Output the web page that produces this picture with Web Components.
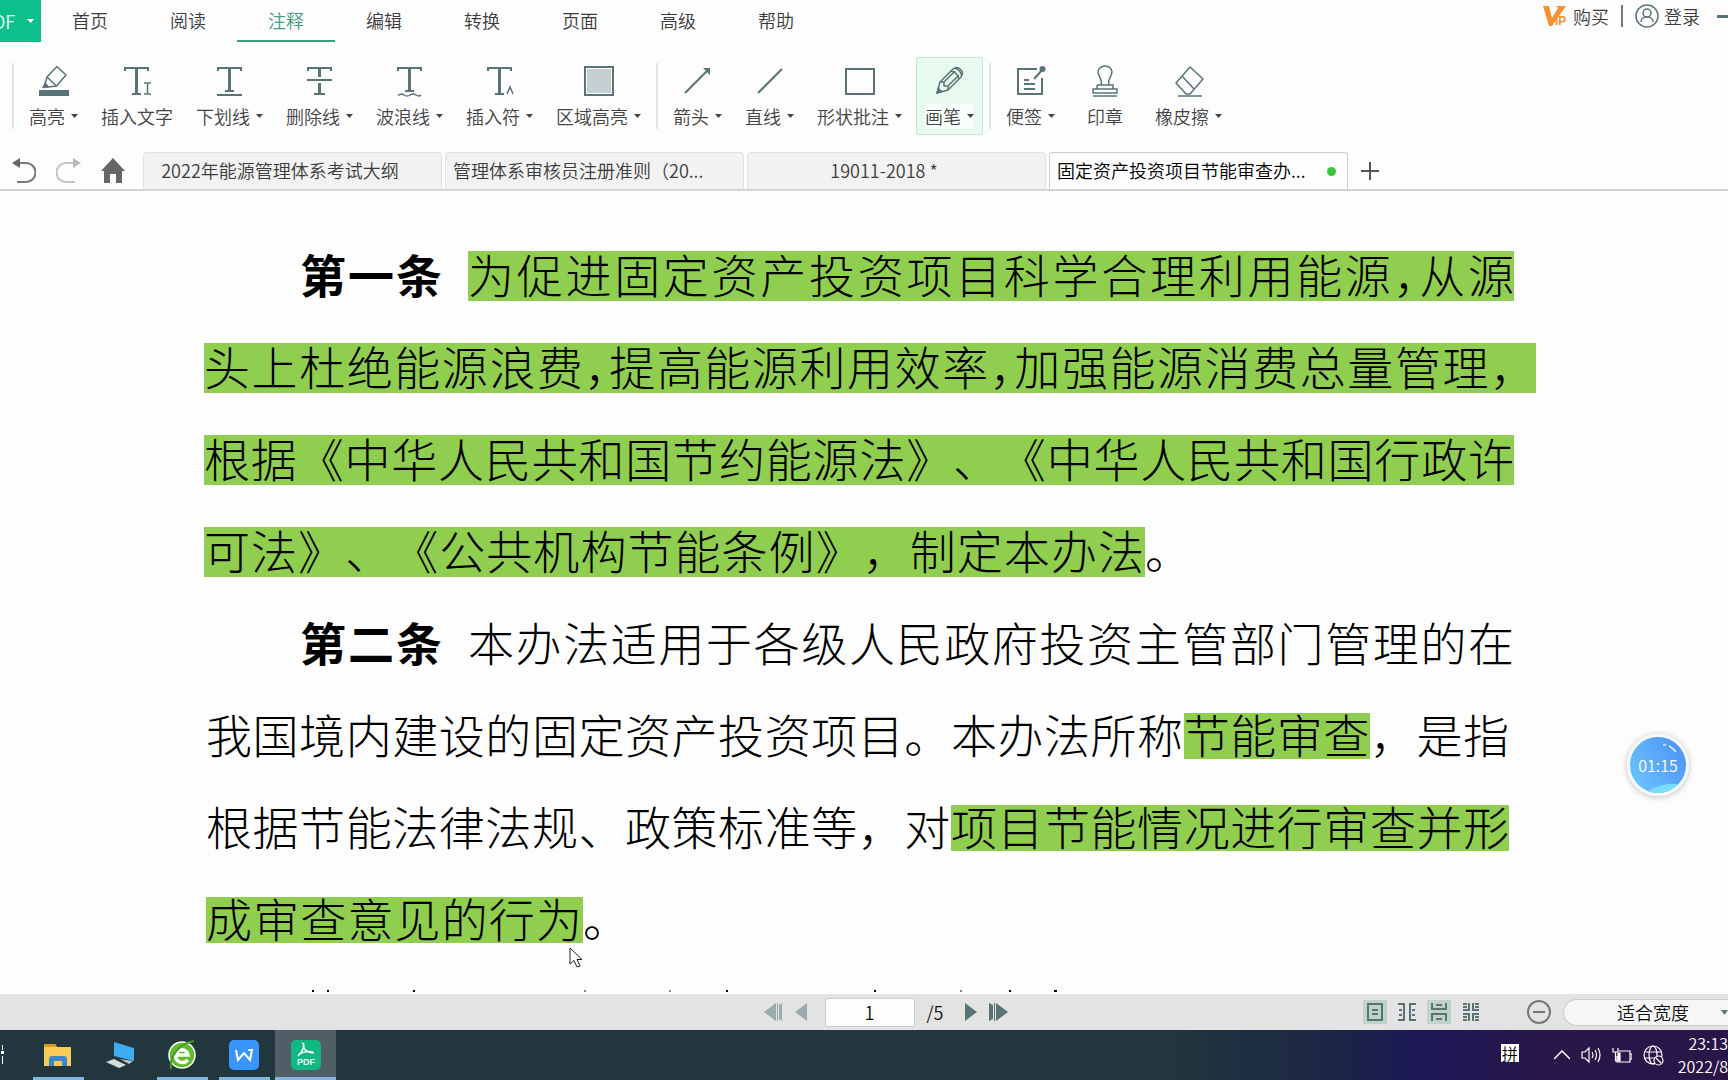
<!DOCTYPE html>
<html lang="zh-CN">
<head>
<meta charset="utf-8">
<title>PDF</title>
<style>
    body {
        margin: 0;
        height: 100vh;
        overflow: hidden;
        background: #fdfdfd;
        color: #3c3c3c;
        font-family: "Noto Sans CJK SC", sans-serif;
        font-size: 18px;
        font-weight: 350;
    }
</style>
</head>
<body>
<pdf-app></pdf-app>

<script>
const base = `
    * { margin: 0; padding: 0; box-sizing: border-box; }
    button, input, select { font: inherit; color: inherit; background: none; border: 0; }
    svg { display: block; flex: none; }
`;

const ink = 'fill="none" stroke="#587476" stroke-width="2"';
const thin = 'fill="none" stroke="#587476" stroke-width="1.5"';

// the big serif T shared by the text tools, b is its foot
const bigT = (b) => `<path d="M4 6V3H27V6M11 ${b}H20" ${ink}/><path d="M15.5 3V${b}" fill="none" stroke="#587476" stroke-width="3"/>`;

const icons = {
    highlight: `<path d="M19 1.5 28 10 18.5 21 6 22.5 9 12ZM9 12 18.5 21" ${thin} stroke-linejoin="round"/><path d="M4 23 7 17 11 21.5Z" fill="#587476"/><rect x="1" y="25" width="30" height="6" fill="#587476"/>`,
    insert: `${bigT(29)}<path d="M23 18H30M26.5 18V29M23 29H30" ${thin}/>`,
    under: `${bigT(26)}<path d="M3 30H28" ${ink}/>`,
    strike: `<path d="M4 6V3H27V6M10 29H21M3 15H28" ${ink}/><path d="M15.5 3V12M15.5 18V29" fill="none" stroke="#587476" stroke-width="3"/>`,
    wave: `${bigT(26)}<path d="M4 30.5Q7 28 10 30T16 30T22 30T27 30" ${thin}/>`,
    caret: `${bigT(29)}<path d="M23 29 26 22 29 29" ${thin}/>`,
    area: `<rect x="2" y="2" width="28" height="28" ${ink}/><rect x="4" y="4" width="24" height="24" fill="#c5cfd0"/>`,
    arrow: `<path d="M3 28 26 5" ${ink}/><path d="M21 3H28V10Z" fill="#587476"/>`,
    line: `<path d="M4 28 28 4" ${ink}/>`,
    rect: `<rect x="2" y="4" width="28" height="25" ${ink}/>`,
    pencil: `<path d="M3 28 6 17 19 4Q23 1 26 4L27 5Q30 8 27 12L14 25ZM6 17 10 17 10 21 14 21 14 25M10 17 21 6M14 21 25 10M17 6Q23 7 25 14M20 3Q26 4 28 11" ${thin} stroke-linejoin="round"/><path d="M2 29 4 22 9 27Z" fill="#587476"/>`,
    note: `<path d="M22 4H3V29H27V13M19 14 28 4M9 15H14M9 19H20M9 24H20" ${ink}/><circle cx="27.5" cy="4" r="3" fill="#587476"/>`,
    stamp: `<path d="M12 20C14 15 9 11 9 7A7 6 0 0 1 23 7C23 11 18 15 20 20M8 20H24V24M8 20V24M4 24H28V28H4ZM4 31H28" ${thin}/>`,
    eraser: `<path d="M17 2 30 14 17 29H13L3 18ZM9 11 21 24M5 31H29" ${thin} stroke-linejoin="round"/>`,
};

class MenuBar extends HTMLElement {
    constructor() {
        super();
        this.attachShadow({ mode: 'open' });
        const items = ['首页', '阅读', '注释', '编辑', '转换', '页面', '高级', '帮助'];
        this.shadowRoot.innerHTML = `
        <style>
            ${base}
            :host { display: flex; height: 42px; flex: none; }
            .brand { width: 41px; background: #0bc08b; color: #e8fff6; display: flex; justify-content: flex-end; align-items: center; gap: 12px; padding-right: 7px; overflow: hidden; }
            nav { display: flex; }
            nav a { width: 98px; text-align: center; line-height: 40px; border-bottom: 2px solid transparent; color: inherit; text-decoration: none; }
            nav a.on { color: #3f9c80; border-color: #3a9e84; }
            .account { margin-left: auto; display: flex; align-items: center; height: 32px; gap: 6px; }
            .account i { width: 2px; height: 22px; background: #777; margin: 0 6px; }
            .account button { display: flex; align-items: center; gap: 5px; }
            .account .min { margin-left: 11px; }
        </style>
        <button class="brand"><span>PDF</span><svg width="7" height="5"><path d="M0 0H7L3.5 4Z" fill="#fff"/></svg></button>
        <nav>${items.map(t => `<a href="#" class="${t === '注释' ? 'on' : ''}">${t}</a>`).join('')}</nav>
        <div class="account">
            <button>
                <svg width="25" height="22"><path d="M0 1H6L9 13 15 3 13 1H23L9 21H6Z" fill="#f79234"/><text x="12" y="20" font-family="Liberation Sans" font-weight="bold" font-size="12" fill="#f79234">IP</text></svg>
                <span>购买</span>
            </button>
            <i></i>
            <button>
                <svg width="24" height="24" fill="none" stroke="#587476" stroke-width="1.5"><circle cx="12" cy="12" r="11"/><circle cx="12" cy="9" r="4"/><path d="M6 18C6 11 18 11 18 18"/></svg>
                <span>登录</span>
            </button>
            <button class="min" aria-label="最小化"><svg width="11" height="3"><path d="M0 1.5H11" stroke="#587476" stroke-width="3"/></svg></button>
        </div>`;
    }
}
customElements.define('menu-bar', MenuBar);

class ToolButton extends HTMLElement {
    constructor() {
        super();
        this.attachShadow({ mode: 'open' });
    }

    connectedCallback() {
        const drop = this.hasAttribute('drop') ? '<svg width="7" height="5"><path d="M0 0H7L3.5 4Z" fill="#444"/></svg>' : '';
        this.shadowRoot.innerHTML = `
        <style>
            ${base}
            :host { display: block; }
            button { display: flex; flex-direction: column; align-items: center; gap: 7px; height: 78px; padding: 7px 8px; border: 1px solid transparent; border-radius: 2px; }
            :host([selected]) button { background: #e8f9f0; border-color: #bfe8d6; }
            :host([selected]) span { background: #f9fdfb; }
            span { display: flex; align-items: center; gap: 6px; line-height: 24px; color: #444; white-space: nowrap; }
        </style>
        <button><svg width="32" height="32">${icons[this.getAttribute('icon')]}</svg><span><slot></slot>${drop}</span></button>`;
    }
}
customElements.define('tool-button', ToolButton);

class ToolBar extends HTMLElement {
    constructor() {
        super();
        this.attachShadow({ mode: 'open' });
        this.shadowRoot.innerHTML = `
        <style>
            ${base}
            :host { display: flex; flex: none; padding: 15px 0 17px 12px; }
            hr { width: 2px; height: 66px; border: 0; background: #e4e4e4; margin-top: 6px; }
            div { display: flex; gap: 5px; padding: 0 6px; }
            div.wide { gap: 14px; }
        </style>
        <hr>
        <div>
            <tool-button icon="highlight" drop>高亮</tool-button>
            <tool-button icon="insert">插入文字</tool-button>
            <tool-button icon="under" drop>下划线</tool-button>
            <tool-button icon="strike" drop>删除线</tool-button>
            <tool-button icon="wave" drop>波浪线</tool-button>
            <tool-button icon="caret" drop>插入符</tool-button>
            <tool-button icon="area" drop>区域高亮</tool-button>
        </div>
        <hr>
        <div>
            <tool-button icon="arrow" drop>箭头</tool-button>
            <tool-button icon="line" drop>直线</tool-button>
            <tool-button icon="rect" drop>形状批注</tool-button>
            <tool-button icon="pencil" drop selected>画笔</tool-button>
        </div>
        <hr>
        <div class="wide">
            <tool-button icon="note" drop>便签</tool-button>
            <tool-button icon="stamp">印章</tool-button>
            <tool-button icon="eraser" drop>橡皮擦</tool-button>
        </div>`;
    }
}
customElements.define('tool-bar', ToolBar);

class DocTab extends HTMLElement {
    constructor() {
        super();
        this.attachShadow({ mode: 'open' });
        this.shadowRoot.innerHTML = `
        <style>
            ${base}
            :host { display: block; width: 299px; }
            button { display: flex; align-items: center; width: 100%; height: 37px; padding: 0 11px 0 7px; background: #f2f2f2; border: 1px solid #e2e2e2; border-bottom: 0; border-radius: 4px 4px 0 0; }
            span { width: 258px; padding-bottom: 2px; text-align: center; white-space: nowrap; }
            :host([long]) span { text-align: left; }
            :host([current]) button { background: #fdfdfd; border-color: #ccc; color: #000; }
            i { display: none; width: 9px; height: 9px; border-radius: 50%; background: #3cc43c; margin-left: auto; }
            :host([current]) i { display: block; }
        </style>
        <button><span><slot></slot></span><i></i></button>`;
    }
}
customElements.define('doc-tab', DocTab);

class TabStrip extends HTMLElement {
    constructor() {
        super();
        this.attachShadow({ mode: 'open' });
        this.shadowRoot.innerHTML = `
        <style>
            ${base}
            :host { display: flex; flex: none; gap: 3px; padding-left: 12px; border-bottom: 2px solid #d4d4d4; }
            .tools { display: flex; align-items: center; gap: 20px; width: 128px; }
            .add { padding: 0 10px; }
        </style>
        <div class="tools">
            <button aria-label="撤销"><svg width="24" height="26" fill="none" stroke="#777" stroke-width="2"><path d="M4 5H14A9 9 0 0 1 14 24H5"/><path d="M0 5 8 0V10Z" fill="#666" stroke="none"/></svg></button>
            <button aria-label="重做"><svg width="25" height="26" fill="none" stroke="#c4c4c4" stroke-width="2"><path d="M20 5H10A9 9 0 0 0 10 24H19"/><path d="M25 5 17 0V10Z" fill="#bbb" stroke="none"/></svg></button>
            <button aria-label="主页"><svg width="24" height="26" fill="#666"><path d="M12 0 24 13H21V25H15V16H9V25H3V13H0Z"/></svg></button>
        </div>
        <doc-tab>2022年能源管理体系考试大纲</doc-tab>
        <doc-tab long>管理体系审核员注册准则（20...</doc-tab>
        <doc-tab>19011-2018 *</doc-tab>
        <doc-tab current long>固定资产投资项目节能审查办...</doc-tab>
        <button class="add" aria-label="新建"><svg width="18" height="18"><path d="M0 9H18M9 0V18" stroke="#555" stroke-width="2"/></svg></button>`;
    }
}
customElements.define('tab-strip', TabStrip);

// one line of the page, spread over the column width
class TextLine extends HTMLElement {
    constructor() {
        super();
        this.attachShadow({ mode: 'open' });
    }

    connectedCallback() {
        const chars = this.getAttribute('chars');
        this.shadowRoot.innerHTML = `
        <style>
            ${base}
            :host { display: flex; line-height: 92px; white-space: nowrap; }
            p { flex: ${chars ? `none; width: calc(${chars} * 47px)` : '1'}; text-align-last: justify; }
        </style>
        <slot name="head"></slot><p><slot></slot></p>`;
    }
}
customElements.define('text-line', TextLine);

class DocPage extends HTMLElement {
    constructor() {
        super();
        this.attachShadow({ mode: 'open' });
        this.shadowRoot.innerHTML = `
        <style>
            ${base}
            :host { display: block; flex: 1; min-height: 0; overflow: hidden; position: relative; padding: 36px 214px 0 204px; color: #000; font-size: 46px; font-weight: 300; text-spacing-trim: space-all; }
            b { width: 142px; margin: 0 26px 0 96px; font-weight: 700; text-align-last: justify; }
            mark { color: inherit; background: linear-gradient(#90ce4f, #90ce4f) 0 11px / 100% 50px no-repeat; }
            text-line.pen { margin: 0 5px 0 2px; }
            .pen mark { background-size: 100% 46px; background-position: 0 13px; }
            .half { font-feature-settings: "halt"; }
            text-line.hang { margin-right: -22px; }
            .cursor { position: absolute; left: 569px; top: 756px; }
            .next { position: absolute; left: 308px; bottom: 1px; }
            .timer { position: absolute; right: 39px; top: 543px; width: 62px; height: 62px; border-radius: 50%; border: 3px solid #f4f9ff; box-shadow: 0 1px 6px rgba(0, 0, 0, .25); background: linear-gradient(60deg, #6fc8fb, #4a8ff8); overflow: hidden; color: #fff; font-size: 16px; font-weight: 350; }
            .timer svg { position: absolute; inset: 0; }
            .timer span { position: relative; }
        </style>
        <text-line><b slot="head">第一条</b><mark>为促进固定资产投资项目科学合理利用能源<span class="half">，</span>从源</mark></text-line>
        <text-line class="hang"><mark>头上杜绝能源浪费<span class="half">，</span>提高能源利用效率<span class="half">，</span>加强能源消费总量管理，</mark></text-line>
        <text-line><mark>根据《中华人民共和国节约能源法》、《中华人民共和国行政许</mark></text-line>
        <text-line chars="21"><mark>可法》、《公共机构节能条例》，制定本办法</mark>。</text-line>
        <text-line><b slot="head">第二条</b>本办法适用于各级人民政府投资主管部门管理的在</text-line>
        <text-line class="pen">我国境内建设的固定资产投资项目。本办法所称<mark>节能审查</mark>，是指</text-line>
        <text-line class="pen">根据节能法律法规、政策标准等，对<mark>项目节能情况进行审查并形</mark></text-line>
        <text-line class="pen" chars="9"><mark>成审查意见的行为</mark>。</text-line>
        <!-- stroke tips of the following line, just above the page edge -->
        <svg class="next" width="760" height="4"><path d="M4 2H6M19 2H21M105 2H107M418 2H420M566 2H568M701 2H703M746 2H749" stroke="#000" stroke-width="2"/><path d="M276 2H278M361 2H363M652 2H654" stroke="#888" stroke-width="2"/></svg>
        <svg class="cursor" width="14" height="21"><path d="M1 1V17L5 13.5 8 20 11 19 8 12.5H13Z" fill="#fff" stroke="#222"/></svg>
        <button class="timer">
            <svg width="56" height="56"><path d="M16 56Q24 49 38 47Q46 46 50 48L48 56Z" fill="#79dcfb"/><path d="M33 8H36M39 9Q43 11 46 15" fill="none" stroke="#d9efff" stroke-width="1.5"/></svg>
            <span>01:15</span>
        </button>`;
    }
}
customElements.define('doc-page', DocPage);

class StatusBar extends HTMLElement {
    constructor() {
        super();
        this.attachShadow({ mode: 'open' });
        this.shadowRoot.innerHTML = `
        <style>
            ${base}
            :host { display: grid; grid-template-columns: 1fr auto 1fr; align-items: center; flex: none; height: 36px; background: #e3e3e3; color: #111; }
            .pager { grid-column: 2; display: flex; align-items: center; gap: 12px; margin-left: 44px; }
            input { width: 90px; height: 29px; background: #fdfdfd; border: 1px solid #ccc; border-radius: 3px; text-align: center; margin-left: 6px; }
            .pager .next { margin-left: 10px; }
            .view { display: flex; align-items: center; justify-content: flex-end; }
            .modes { display: flex; gap: 8px; margin-right: 44px; }
            .modes button { width: 24px; height: 24px; }
            .modes .on { background: #bfd3c7; }
            .zoom { display: flex; align-items: center; position: relative; margin-left: 12px; }
            select { appearance: none; width: 165px; height: 27px; line-height: 25px; padding-left: 14px; text-align-last: center; background: #f6f6f6; border: 1px solid #ccc; border-right: 0; border-radius: 14px 0 0 14px; }
            .zoom svg { position: absolute; right: 0; }
        </style>
        <div class="pager">
            <button aria-label="首页"><svg width="19" height="20" fill="#9aabab"><path d="M0 10 12 1V19ZM13 1H14V19H13ZM18 1V19L15 17V3Z"/></svg></button>
            <button aria-label="上一页"><svg width="12" height="20" fill="#9aabab"><path d="M0 10 12 1V19Z"/></svg></button>
            <input value="1" aria-label="页码">
            <span>/5</span>
            <button class="next" aria-label="下一页"><svg width="12" height="20" fill="#587476"><path d="M12 10 0 1V19Z"/></svg></button>
            <button aria-label="末页"><svg width="19" height="20" fill="#587476"><path d="M19 10 7 1V19ZM0 1 4 3V17L0 19ZM5 1H6V19H5Z"/></svg></button>
        </div>
        <div class="view">
            <div class="modes">
                <button class="on" aria-label="单页"><svg width="24" height="24" fill="none" stroke="#587476" stroke-width="2"><path d="M5 4H19V20H5ZM9 10H15M9 14H15"/></svg></button>
                <button aria-label="双页"><svg width="24" height="24" fill="none" stroke="#587476" stroke-width="2"><path d="M3 4H9V20H3M21 4H15V20H21M4 10H7M4 15H7M17 10H20M17 15H20"/></svg></button>
                <button class="on" aria-label="连续"><svg width="24" height="24" fill="none" stroke="#587476" stroke-width="2"><path d="M5 3V9H19V3M5 21V14H19V21M9 5H15M9 19H15"/></svg></button>
                <button aria-label="双页连续"><svg width="24" height="24" fill="none" stroke="#587476" stroke-width="2"><path d="M4 10H10V3M20 10H14V3M4 14H10V21M20 14H14V21M4 4H8M4 7H8M16 4H20M16 7H20M4 17H8M4 20H8M16 17H20M16 20H20"/></svg></button>
            </div>
            <button aria-label="缩小"><svg width="24" height="24" fill="none" stroke="#777" stroke-width="2"><circle cx="12" cy="12" r="11"/><path d="M6 12H18"/></svg></button>
            <div class="zoom">
                <select aria-label="缩放"><option>适合宽度</option></select>
                <svg width="7" height="5"><path d="M0 0H7L3.5 5Z" fill="#587476"/></svg>
            </div>
        </div>`;
    }
}
customElements.define('status-bar', StatusBar);

class TaskBar extends HTMLElement {
    constructor() {
        super();
        this.attachShadow({ mode: 'open' });
        this.shadowRoot.innerHTML = `
        <style>
            ${base}
            :host { display: flex; flex: none; height: 50px; color: #fff; background: linear-gradient(90deg, #21363d 68%, #1b2446 78%, #1d1857 82%, #291749 90%, #2b1548); }
            .apps { display: flex; margin-left: 23px; }
            .apps button { width: 62px; display: flex; align-items: center; justify-content: center; }
            .run { background: linear-gradient(#82b6e0, #82b6e0) center bottom / 51px 3px no-repeat; }
            .apps .now { background: #505f66; border-bottom: 3px solid #82b6e0; width: 61px; padding-top: 3px; }
            .tray { display: flex; align-items: center; margin-left: auto; gap: 11px; }
            .ime { width: 18px; height: 18px; background: #fff; color: #000; font-size: 16px; line-height: 18px; text-align: center; margin-right: 24px; margin-bottom: 4px; }
            .clock { font-size: 16px; line-height: 23px; text-align: right; margin-left: 3px; }
        </style>
        <svg width="4" height="50" fill="#fff"><path d="M2 15H3V20H2ZM1 21H4V24H1ZM2 26H3V34H2Z"/></svg>
        <div class="apps">
            <button class="run" aria-label="文件资源管理器"><svg width="28" height="24"><path d="M0 1H11L13 4H27V23H0Z" fill="#f9cb59"/><path d="M0 1H11L13 4H0Z" fill="#dc9a16"/><path d="M5 23V16Q5 13 8 13H20Q23 13 23 16V23H18V18H10V23Z" fill="#3c88c6"/></svg></button>
            <button aria-label="此电脑"><svg width="28" height="26"><path d="M8 0 28 6V19L8 14Z" fill="#3eacf0"/><path d="M0 20 8 17 20 23 13 26Z" fill="#d5dadd"/><path d="M14 17 27 19 23 22Z" fill="#b9c4ca"/></svg></button>
            <button class="run" aria-label="浏览器"><svg width="28" height="30"><circle cx="14" cy="15" r="13" fill="#62bb2b" stroke="#fff" stroke-width="1.5"/><path d="M20 20C15 25 7 22 8 15 9 8 19 8 20 15H9" fill="none" stroke="#fff" stroke-width="3.5"/><path d="M3 29C1 16 12 3 26 1" fill="none" stroke="#3f9c2c" stroke-width="2"/></svg></button>
            <button class="run" aria-label="WPS"><svg width="30" height="30"><rect width="30" height="30" rx="5" fill="#3795fb"/><path d="M7 10 9 20 15 13 21 20 23 10H19" fill="none" stroke="#fff" stroke-width="2"/></svg></button>
            <button class="now" aria-label="PDF"><svg width="30" height="30"><rect width="30" height="30" rx="5" fill="#10b981"/><path d="M11 3C15 4 12 11 7 16M12 6C14 11 18 13 23 13M9 14C13 11 17 11 22 12" fill="none" stroke="#fff" stroke-width="1.5"/><text x="15" y="25" text-anchor="middle" font-family="Liberation Sans" font-size="9" font-weight="bold" fill="#e8fff6">PDF</text></svg></button>
        </div>
        <div class="tray">
            <span class="ime">拼</span>
            <svg width="16" height="10" fill="none" stroke="#fff" stroke-width="1.5"><path d="M0 9 8 1 16 9"/></svg>
            <svg width="20" height="18" fill="none" stroke="#fff" stroke-width="1.2"><path d="M1 6H4L8 2V16L4 12H1ZM11 6Q13 9 11 12M14 4Q17 9 14 14M17 2Q21 9 17 16"/></svg>
            <svg width="20" height="16" fill="none" stroke="#fff" stroke-width="1.2"><path d="M7 4H18V15H5V9M18 7H20V12H18M1 1V5H6V1M3.5 5V14H5"/><path d="M6 6H8V14H6Z" fill="#fff"/></svg>
            <svg width="21" height="21" fill="none" stroke="#fff" stroke-width="1.2"><circle cx="10" cy="10" r="9"/><ellipse cx="10" cy="10" rx="4" ry="9"/><path d="M1 7H19M1 13H12"/><circle cx="15.5" cy="15.5" r="4.5" fill="#2b1548"/><path d="M12.5 12.5 18.5 18.5"/></svg>
            <div class="clock"><div>23:13</div><div>2022/8</div></div>
        </div>`;
    }
}
customElements.define('task-bar', TaskBar);

class PdfApp extends HTMLElement {
    constructor() {
        super();
        this.attachShadow({ mode: 'open' });
        this.shadowRoot.innerHTML = `
        <style>
            :host { display: flex; flex-direction: column; height: 100vh; }
        </style>
        <menu-bar></menu-bar>
        <tool-bar></tool-bar>
        <tab-strip></tab-strip>
        <doc-page></doc-page>
        <status-bar></status-bar>
        <task-bar></task-bar>`;
    }
}
customElements.define('pdf-app', PdfApp);
</script>
</body>
</html>
